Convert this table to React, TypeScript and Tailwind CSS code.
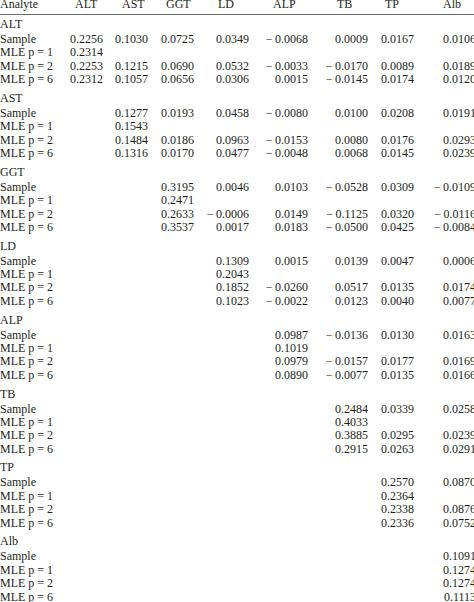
const cols = "grid grid-cols-[60px_43px_45px_46px_55px_59px_60px_46px_62px]";

const headers = [
  { label: "ALT", pad: "pl-[15px]" },
  { label: "AST", pad: "pl-[19px]" },
  { label: "GGT", pad: "pl-[18px]" },
  { label: "LD", pad: "pl-[24px]" },
  { label: "ALP", pad: "pl-[24px]" },
  { label: "TB", pad: "pl-[29px]" },
  { label: "TP", pad: "pl-[17px]" },
  { label: "Alb", pad: "pl-[29px]" },
];

// values start at the analyte's own column (upper triangle)
const groups: { name: string; rows: string[][] }[] = [
  {
    name: "ALT",
    rows: [
      ["0.2256", "0.1030", "0.0725", "0.0349", "-0.0068", "0.0009", "0.0167", "0.0106"],
      ["0.2314"],
      ["0.2253", "0.1215", "0.0690", "0.0532", "-0.0033", "-0.0170", "0.0089", "0.0189"],
      ["0.2312", "0.1057", "0.0656", "0.0306", "0.0015", "-0.0145", "0.0174", "0.0120"],
    ],
  },
  {
    name: "AST",
    rows: [
      ["0.1277", "0.0193", "0.0458", "-0.0080", "0.0100", "0.0208", "0.0191"],
      ["0.1543"],
      ["0.1484", "0.0186", "0.0963", "-0.0153", "0.0080", "0.0176", "0.0293"],
      ["0.1316", "0.0170", "0.0477", "-0.0048", "0.0068", "0.0145", "0.0239"],
    ],
  },
  {
    name: "GGT",
    rows: [
      ["0.3195", "0.0046", "0.0103", "-0.0528", "0.0309", "-0.0109"],
      ["0.2471"],
      ["0.2633", "-0.0006", "0.0149", "-0.1125", "0.0320", "-0.0116"],
      ["0.3537", "0.0017", "0.0183", "-0.0500", "0.0425", "-0.0084"],
    ],
  },
  {
    name: "LD",
    rows: [
      ["0.1309", "0.0015", "0.0139", "0.0047", "0.0006"],
      ["0.2043"],
      ["0.1852", "-0.0260", "0.0517", "0.0135", "0.0174"],
      ["0.1023", "-0.0022", "0.0123", "0.0040", "0.0077"],
    ],
  },
  {
    name: "ALP",
    rows: [
      ["0.0987", "-0.0136", "0.0130", "0.0163"],
      ["0.1019"],
      ["0.0979", "-0.0157", "0.0177", "0.0169"],
      ["0.0890", "-0.0077", "0.0135", "0.0166"],
    ],
  },
  {
    name: "TB",
    rows: [
      ["0.2484", "0.0339", "0.0258"],
      ["0.4033"],
      ["0.3885", "0.0295", "0.0239"],
      ["0.2915", "0.0263", "0.0291"],
    ],
  },
  {
    name: "TP",
    rows: [["0.2570", "0.0870"], ["0.2364"], ["0.2338", "0.0876"], ["0.2336", "0.0752"]],
  },
  {
    name: "Alb",
    rows: [["0.1091"], ["0.1274"], ["0.1274"], ["0.1113"]],
  },
];

const rowLabels = ["Sample", "MLE p = 1", "MLE p = 2", "MLE p = 6"];

function fmt(v: string) {
  return v.startsWith("-") ? "\u2212\u2009" + v.slice(1) : v;
}

export default function App() {
  return (
    <main className="h-[602px] w-[474px] overflow-hidden bg-white font-['Liberation_Serif',serif] text-[12px] leading-[13.4px] text-[#231f20]">
      <div className={`${cols} -mt-[2px] border-b border-[#6b6b6b] pb-[2.5px]`}>
        <div>Analyte</div>
        {headers.map((h) => (
          <div key={h.label} className={`whitespace-nowrap ${h.pad}`}>
            {h.label}
          </div>
        ))}
      </div>

      <div className="flex flex-col gap-[5.3px] pt-[3px]">
        {groups.map((g, gi) => (
          <section key={g.name}>
            <div className="mb-[1.6px]">{g.name}</div>
            {g.rows.map((vals, ri) => (
              <div key={ri} className={cols}>
                <div className="whitespace-nowrap">{rowLabels[ri]}</div>
                {headers.map((_, ci) => {
                  const v = ci >= gi ? vals[ci - gi] : undefined;
                  return (
                    <div key={ci} className="whitespace-nowrap text-right">
                      {v ? fmt(v) : ""}
                    </div>
                  );
                })}
              </div>
            ))}
          </section>
        ))}
      </div>
    </main>
  );
}
